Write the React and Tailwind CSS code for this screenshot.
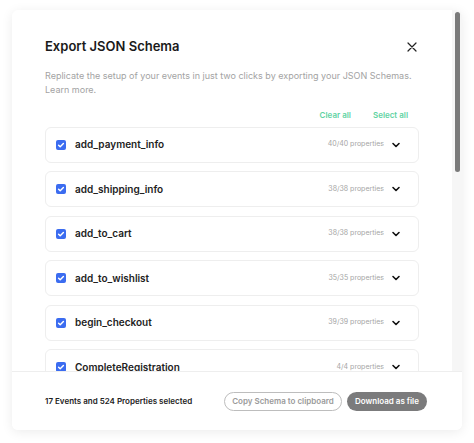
import React from "react";

const events = [
  { name: "add_payment_info", props: "40/40 properties" },
  { name: "add_shipping_info", props: "38/38 properties" },
  { name: "add_to_cart", props: "38/38 properties" },
  { name: "add_to_wishlist", props: "35/35 properties" },
  { name: "begin_checkout", props: "39/39 properties" },
  { name: "CompleteRegistration", props: "4/4 properties" },
];

const Check = () => (
  <span className="flex h-[10px] w-[10px] items-center justify-center rounded-[2px] bg-[#3b6cf0]">
    <svg width="8" height="8" viewBox="0 0 10 10" fill="none">
      <path d="M2 5.2l2 2L8 3" stroke="white" strokeWidth="1.8" strokeLinecap="round" strokeLinejoin="round" />
    </svg>
  </span>
);

const Chevron = () => (
  <svg width="10" height="10" viewBox="0 0 10 10" fill="none">
    <path d="M2 3.5l3 3 3-3" stroke="#111" strokeWidth="1.6" strokeLinecap="round" strokeLinejoin="round" />
  </svg>
);

const EventRow = ({ name, props }) => (
  <div className="flex h-[36px] items-center rounded-[6px] border border-[#eeeeee] bg-white pl-[10px] pr-[17px]">
    <Check />
    <span className="ml-[9px] text-[10px] font-semibold text-[#222]">{name}</span>
    <span className="ml-auto text-[7px] text-[#a5a5a5]">{props}</span>
    <span className="ml-[7px] flex">
      <Chevron />
    </span>
  </div>
);

const App = () => {
  return (
    <div className="h-[443px] w-[474px] bg-white pl-[12px] pt-[10px]" style={{ fontFamily: "Inter, 'Noto Sans', sans-serif" }}>
      <div className="flex h-[420px] w-[450px] flex-col overflow-hidden rounded-[6px] bg-white shadow-[0_2px_12px_rgba(0,0,0,0.08)]">
        <div className="flex min-h-0 flex-1">
          <div className="min-h-0 flex-1 overflow-hidden px-[33px] pt-[27px]">
            <div className="flex items-center justify-between">
              <h2 className="text-[13px] font-semibold text-[#1a1a1a]">Export JSON Schema</h2>
              <svg width="10" height="10" viewBox="0 0 10 10" className="mr-[2px]">
                <path d="M1 1l8 8M9 1L1 9" stroke="#222" strokeWidth="1.2" strokeLinecap="round" />
              </svg>
            </div>
            <p className="mt-[12px] text-[9px] leading-[14px] text-[#a3a3a3]">
              Replicate the setup of your events in just two clicks by exporting your JSON Schemas. Learn more.
            </p>
            <div className="mt-[12px] flex justify-end gap-[22px] pr-[11px] text-[8px] font-semibold text-[#5fd3a3]">
              <span>Clear all</span>
              <span>Select all</span>
            </div>
            <div className="mt-[6px] flex flex-col gap-[8.5px]">
              {events.map((e) => (
                <EventRow key={e.name} {...e} />
              ))}
            </div>
          </div>
          <div className="w-[10px] bg-[#f6f6f6] pt-[2px]">
            <div className="mx-auto h-[160px] w-[5px] rounded-full bg-[#7a7a7a]" />
          </div>
        </div>
        <div className="flex h-[59px] items-center border-t border-[#eeeeee] bg-white pl-[33px] pr-[35px]">
          <span className="text-[8px] font-semibold text-[#222]">17 Events and 524 Properties selected</span>
          <button className="ml-auto h-[19px] w-[118px] rounded-full border border-[#bdbdbd] bg-white text-[8px] font-semibold text-[#9a9a9a]">
            Copy Schema to clipboard
          </button>
          <button className="ml-[5px] h-[19px] w-[80px] rounded-full bg-[#7b7b7c] text-[8px] font-semibold text-white">
            Download as file
          </button>
        </div>
      </div>
    </div>
  );
};

export default App;
